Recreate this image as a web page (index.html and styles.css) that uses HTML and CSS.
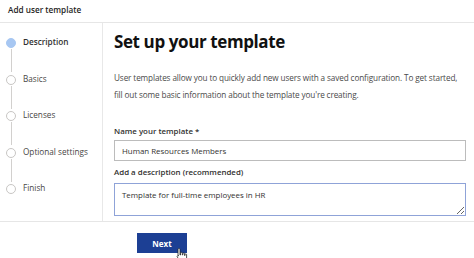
FILE: index.html
```html
<!DOCTYPE html>
<html lang="en">
<head>
    <meta charset="UTF-8">
    <meta name="viewport" content="width=device-width, initial-scale=1.0">
    <title>Add user template</title>
    <link rel="stylesheet" href="styles.css">
</head>
<body>
    <div class="panel-header">Add user template</div>

    <div class="wizard">
        <!-- Step list -->
        <ul class="steps">
            <li class="step current"><span class="dot"></span>Description</li>
            <li class="step"><span class="dot"></span>Basics</li>
            <li class="step"><span class="dot"></span>Licenses</li>
            <li class="step"><span class="dot"></span>Optional settings</li>
            <li class="step last"><span class="dot"></span>Finish</li>
        </ul>

        <div class="wizard-main">
            <h1 class="page-title">Set up your template</h1>
            <p class="intro">User templates allow you to quickly add new users with a saved configuration. To get started, fill out some basic information about the template you're creating.</p>

            <label class="field-label" for="tpl-name">Name your template *</label>
            <input class="text-input" id="tpl-name" type="text" value="Human Resources Members">

            <label class="field-label" for="tpl-desc">Add a description (recommended)</label>
            <textarea class="text-area" id="tpl-desc">Template for full-time employees in HR</textarea>
        </div>
    </div>

    <div class="panel-footer">
        <button class="primary-btn">Next</button>
        <svg class="pointer" width="14" height="16" viewBox="0 0 14 16">
            <path d="M3 1.5c.6 0 1 .4 1 1V8h.5V6.2c0-.5.4-.9.9-.9s.9.4.9.9V8h.5V6.8c0-.5.4-.9.9-.9s.9.4.9.9V8.5h.4V7.6c0-.5.4-.8.8-.8s.8.3.8.8V12c0 2-1.3 3.5-3.3 3.5H7c-1.3 0-2.2-.6-2.9-1.6L1.3 10c-.3-.4-.2-1 .2-1.3.4-.3.9-.2 1.2.2L2 8V2.5c0-.6.4-1 1-1z" fill="#fff" stroke="#222" stroke-width="0.8"/>
        </svg>
    </div>
</body>
</html>
```

FILE: styles.css
```css
/* Page basics */
body {
    margin: 0;
    width: 474px;
    height: 258px;
    overflow: hidden;
    background-color: #ffffff;
    font-family: "Open Sans", "Noto Sans", Arial, sans-serif;
    color: #323130;
}

/* Panel header */
.panel-header {
    height: 22px;
    padding-left: 8px;
    font-size: 8.2px;
    font-weight: 600;
    line-height: 20px;
    color: #252423;
    border-bottom: 1px solid #e6e6e6;
}

/* Wizard body: step list + form */
.wizard {
    display: flex;
    height: 198px;
    border-bottom: 1px solid #e6e6e6;
}

.steps {
    width: 103px;
    margin: 0;
    padding: 13px 0 0 0;
    list-style: none;
    border-right: 1px solid #e8e8e8;
}

.step {
    position: relative;
    display: flex;
    align-items: flex-start;
    height: 36.6px;
    padding-left: 6px;
    font-size: 8.2px;
    color: #484644;
}

.step.current {
    font-weight: 600;
    color: #323130;
}

.dot {
    width: 8px;
    height: 8px;
    margin: 2px 7px 0 0;
    border: 1px solid #c8c6c4;
    border-radius: 50%;
    background-color: #ffffff;
    flex-shrink: 0;
}

.step.current .dot {
    border-color: #a7c7f2;
    background-color: #a7c7f2;
}

/* connector line under each dot */
.step::after {
    content: '';
    position: absolute;
    left: 11px;
    top: 13px;
    width: 1px;
    height: 23px;
    background-color: #d2d0ce;
}

.step.last::after {
    display: none;
}

.wizard-main {
    flex: 1;
    padding: 7px 8px 0 11px;
    display: flex;
    flex-direction: column;
}

.page-title {
    margin: 0;
    font-size: 17px;
    font-weight: 700;
    letter-spacing: -0.4px;
    color: #111111;
    line-height: 24px;
}

.intro {
    margin: 15px 0 0 0;
    font-size: 8.2px;
    letter-spacing: -0.12px;
    line-height: 17px;
    color: #4a4a4a;
}

.field-label {
    margin-top: 22px;
    font-size: 7.9px;
    font-weight: 600;
    color: #323130;
    line-height: 12px;
}

.text-input,
.text-area {
    box-sizing: border-box;
    width: 352px;
    margin-top: 3px;
    padding: 0 7px;
    font-family: "Open Sans", "Noto Sans", Arial, sans-serif;
    font-size: 7.9px;
    color: #323130;
    outline: none;
}

.text-input {
    height: 21px;
    border: 1px solid #bcbcbc;
}

.text-area {
    height: 33px;
    margin-top: 5px;
    padding-top: 6px;
    border: 1px solid #8fa3d8;
    resize: vertical;
}

.text-input + .field-label {
    margin-top: 5px;
}

/* Footer */
.panel-footer {
    position: relative;
    padding: 11px 0 0 137px;
}

.primary-btn {
    display: block;
    width: 50px;
    height: 20px;
    padding: 0;
    border: none;
    background-color: #1c3f94;
    color: #ffffff;
    font-family: "Open Sans", "Noto Sans", Arial, sans-serif;
    font-size: 8px;
    font-weight: 700;
}

.pointer {
    position: absolute;
    left: 176px;
    top: 25px;
}
```
